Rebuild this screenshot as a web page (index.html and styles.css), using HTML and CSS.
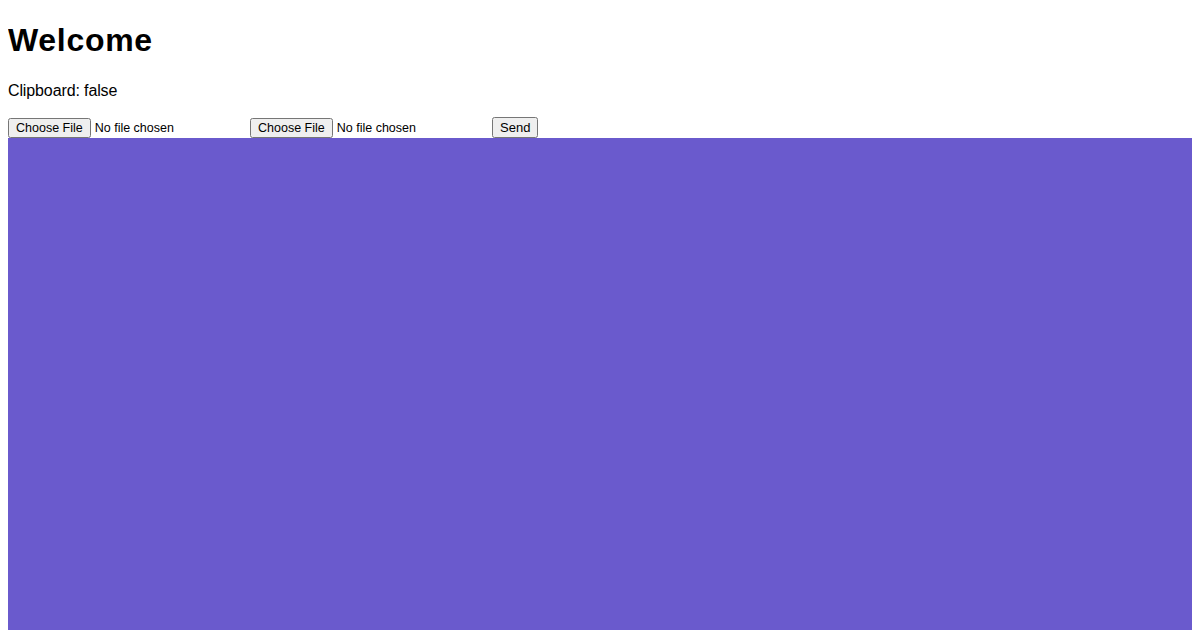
FILE: index.html
```html
<!DOCTYPE html>
<html>
<head>
<meta charset="utf-8">
<link rel="stylesheet" href="styles.css">
</head>
<body>
<h1 class="title">Welcome</h1>
<p class="status">Clipboard: false</p>
<input class="picker" type="file"> <input class="picker" type="file"> <button class="send">Send</button>
<div class="stage"></div>
</body>
</html>
```
FILE: styles.css
```css
body {
  font-family: "Liberation Sans", Arial, sans-serif;
}
.title {
  margin-top: 14px;
  margin-bottom: 22.5px;
  letter-spacing: 0.7px;
}
.status {
  margin-bottom: 17px;
  letter-spacing: -0.12px;
}
.picker {
  width: 237.6px;
  font-family: "Liberation Sans", Arial, sans-serif;
  font-size: 12.5px;
}
.send {
  font-family: "Liberation Sans", Arial, sans-serif;
  font-size: 13px;
}
.stage {
  background: #6a5acd;
  height: 600px;
}
```
